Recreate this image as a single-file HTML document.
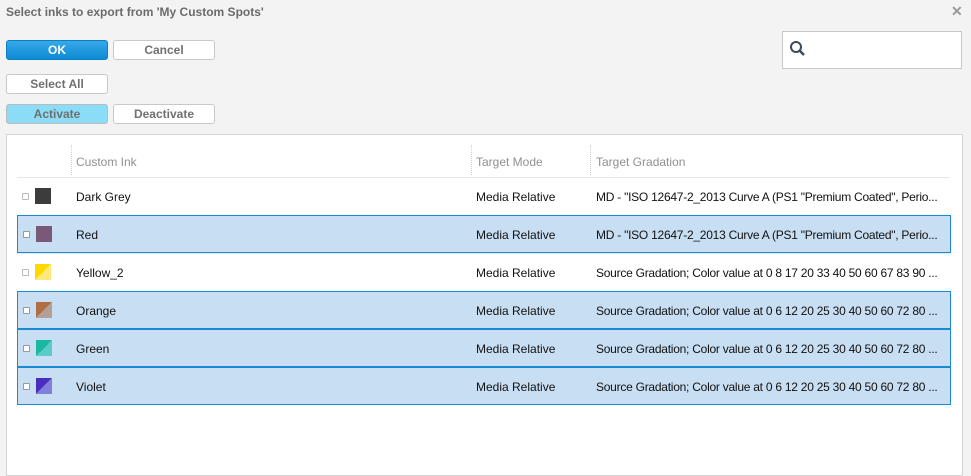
<!DOCTYPE html>
<html><head><style>
body{margin:0;width:971px;height:461px;background:#f3f3f3;font-family:"Liberation Sans",sans-serif;position:relative;overflow:hidden}
.a{position:absolute}
.title{left:6px;top:5px;font-size:12px;font-weight:bold;color:#6b6b6b}
.btn{position:absolute;height:18px;border:1px solid #c8c8c8;border-radius:3px;background:#fff;font-size:12px;font-weight:bold;color:#707070;text-align:center;line-height:18px;box-sizing:content-box}
.panel{left:6px;top:134px;width:955px;height:340px;background:#fff;border:1px solid #d4d4d4}
.hdr{position:absolute;top:155px;font-size:12px;color:#909090}
.sep{position:absolute;top:145px;height:30px;border-left:1px dotted #d0d0d0}
.row{position:absolute;left:17px;width:933px;height:37px;font-size:12px;color:#111;border-top:1px solid #e6e6e6;white-space:nowrap;overflow:hidden}
.row.s{background:#c8def3;border:1px solid #1a8ad4;width:932px;height:36px}
.row span{position:absolute;top:12px}
.row span.g{letter-spacing:-0.25px}
.cb{position:absolute;left:5px;top:15px;width:5px;height:5px;border:1px solid #bbb;border-radius:1px;background:#fff}
.sw{position:absolute;left:18px;top:10px;width:16px;height:16px}
</style></head><body>
<div class="a title">Select inks to export from 'My Custom Spots'</div>
<div class="a" style="left:951px;top:3px;font-size:14px;font-weight:bold;color:#999">✕</div>
<div class="btn" style="left:6px;top:40px;width:100px;background:linear-gradient(#38a9e8,#0d8ad5);border-color:#0b7fc6;color:#fff">OK</div>
<div class="btn" style="left:113px;top:40px;width:100px">Cancel</div>
<div class="btn" style="left:6px;top:74px;width:100px">Select All</div>
<div class="btn" style="left:6px;top:104px;width:100px;background:#8adcf7;border-color:#bbb">Activate</div>
<div class="btn" style="left:113px;top:104px;width:100px">Deactivate</div>
<div class="a" style="left:782px;top:31px;width:178px;height:36px;background:#fff;border:1px solid #c8c8c8"></div>
<svg class="a" style="left:789px;top:40px" width="18" height="18"><circle cx="7" cy="7" r="5" stroke="#3c4a5a" stroke-width="2" fill="none"/><line x1="10.5" y1="10.5" x2="15" y2="15" stroke="#3c4a5a" stroke-width="2.5"/></svg>
<div class="a panel"></div>
<div class="sep" style="left:71px"></div><div class="sep" style="left:471px"></div><div class="sep" style="left:590px"></div>
<div class="hdr" style="left:76px">Custom Ink</div>
<div class="hdr" style="left:476px">Target Mode</div>
<div class="hdr" style="left:596px">Target Gradation</div>

<div class="row" style="top:177px"><div class="cb"></div><div class="sw" style="background:#3c3c3c"></div><span style="left:59px">Dark Grey</span><span style="left:459px">Media Relative</span><span class="g" style="left:579px">MD - "ISO 12647-2_2013 Curve A (PS1 "Premium Coated", Perio...</span></div>
<div class="row s" style="top:215px"><div class="cb" style="border-color:#999"></div><div class="sw" style="background:#7a5878"></div><span style="left:58px">Red</span><span style="left:458px">Media Relative</span><span class="g" style="left:578px">MD - "ISO 12647-2_2013 Curve A (PS1 "Premium Coated", Perio...</span></div>
<div class="row" style="top:253px"><div class="cb"></div><div class="sw" style="background:linear-gradient(135deg,#ffd800 50%,#ffe97a 50%)"></div><span style="left:59px">Yellow_2</span><span style="left:459px">Media Relative</span><span class="g" style="left:579px">Source Gradation; Color value at 0 8 17 20 33 40 50 60 67 83 90 ...</span></div>
<div class="row s" style="top:291px"><div class="cb" style="border-color:#999"></div><div class="sw" style="background:linear-gradient(135deg,#b06e42 50%,#b2a096 50%)"></div><span style="left:58px">Orange</span><span style="left:458px">Media Relative</span><span class="g" style="left:578px">Source Gradation; Color value at 0 6 12 20 25 30 40 50 60 72 80 ...</span></div>
<div class="row s" style="top:329px"><div class="cb" style="border-color:#999"></div><div class="sw" style="background:linear-gradient(135deg,#1ab8a0 50%,#5ccac6 50%)"></div><span style="left:58px">Green</span><span style="left:458px">Media Relative</span><span class="g" style="left:578px">Source Gradation; Color value at 0 6 12 20 25 30 40 50 60 72 80 ...</span></div>
<div class="row s" style="top:367px"><div class="cb" style="border-color:#999"></div><div class="sw" style="background:linear-gradient(135deg,#4a2ec0 50%,#8080d8 50%)"></div><span style="left:58px">Violet</span><span style="left:458px">Media Relative</span><span class="g" style="left:578px">Source Gradation; Color value at 0 6 12 20 25 30 40 50 60 72 80 ...</span></div>
</body></html>
